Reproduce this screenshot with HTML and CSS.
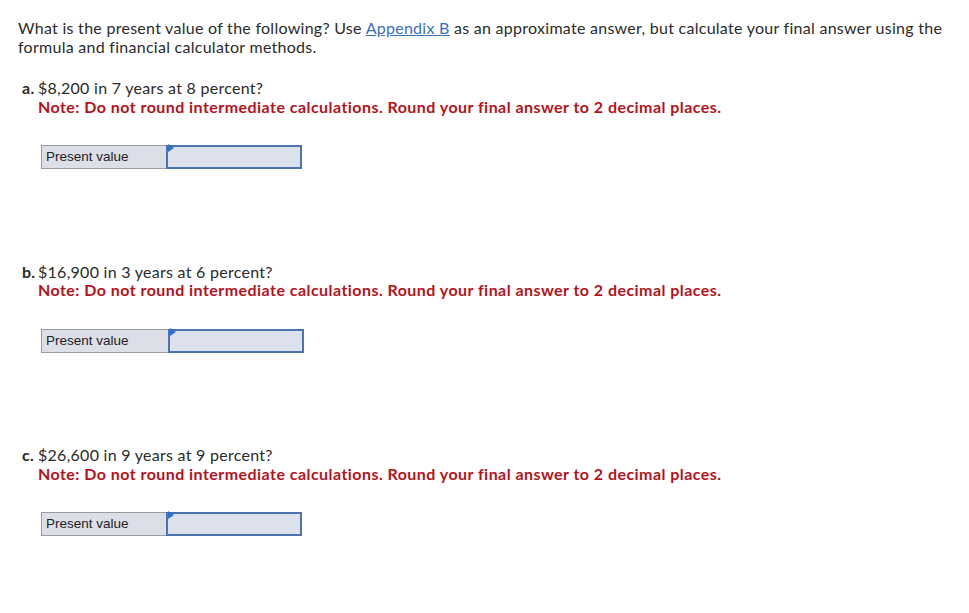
FILE: index.html
```html
<!DOCTYPE html>
<html lang="en">
<head>
<meta charset="utf-8">
<title>Present value</title>
<link rel="stylesheet" href="styles.css">
</head>
<body>
<div class="page">
  <p class="intro">What is the present value of the following? Use <a href="#" class="link">Appendix B</a> as an approximate answer, but calculate your final answer using the formula and financial calculator methods.</p>

  <div class="parts">
    <section class="part">
      <div class="question"><span class="label">a.</span><span class="qtext">$8,200 in 7 years at 8 percent?</span></div>
      <div class="note">Note: Do not round intermediate calculations. Round your final answer to 2 decimal places.</div>
      <div class="answer">
        <div class="answer-label">Present value</div>
        <div class="answer-input"><span class="flag"></span></div>
      </div>
    </section>

    <section class="part">
      <div class="question"><span class="label">b.</span><span class="qtext">$16,900 in 3 years at 6 percent?</span></div>
      <div class="note">Note: Do not round intermediate calculations. Round your final answer to 2 decimal places.</div>
      <div class="answer">
        <div class="answer-label wide">Present value</div>
        <div class="answer-input"><span class="flag"></span></div>
      </div>
    </section>

    <section class="part">
      <div class="question"><span class="label">c.</span><span class="qtext">$26,600 in 9 years at 9 percent?</span></div>
      <div class="note">Note: Do not round intermediate calculations. Round your final answer to 2 decimal places.</div>
      <div class="answer">
        <div class="answer-label">Present value</div>
        <div class="answer-input"><span class="flag"></span></div>
      </div>
    </section>
  </div>
</div>
</body>
</html>
```

FILE: styles.css
```css
html, body {
  margin: 0;
  padding: 0;
  background: #ffffff;
}

body {
  font-family: "Lato", "Open Sans", sans-serif;
  font-size: 16px;
  letter-spacing: 0.27px;
  color: #2b2b2b;
}

.page {
  padding: 18px 18px;
}

.intro {
  margin: 0;
  width: 935px;
  line-height: 19px;
}

.link {
  color: #3a6fc0;
  text-decoration: underline;
}

.parts {
  margin-top: 23px;
  display: flex;
  flex-direction: column;
  gap: 93.5px;
}

.part {
  display: flex;
  flex-direction: column;
}

.question {
  display: flex;
  line-height: 18.5px;
  padding-left: 4px;
}

.label {
  width: 16px;
  font-weight: 700;
}

.note {
  padding-left: 20px;
  line-height: 18.5px;
  font-weight: 700;
  letter-spacing: 0.45px;
  color: #b5121b;
}

.answer {
  margin-top: 29px;
  margin-left: 23px;
  display: flex;
  height: 24px;
  font-family: "Liberation Sans", Arial, sans-serif;
  font-size: 13.5px;
  letter-spacing: 0;
}

.answer-label {
  width: 125px;
  box-sizing: border-box;
  border: 1px solid #9c9c9c;
  border-right: none;
  background: #dcdfe8;
  color: #222;
  padding: 3px 4px;
  line-height: 16px;
}

.answer-label.wide {
  width: 127px;
}

.answer-input {
  position: relative;
  width: 136px;
  box-sizing: border-box;
  border: 2px solid #4b74ae;
  background: #dde1eb;
}

.flag {
  position: absolute;
  top: 0;
  left: 0;
  width: 0;
  height: 0;
  border-top: 4px solid transparent;
  border-bottom: 4px solid transparent;
  border-left: 6px solid #2f6fd1;
  transform: translateY(-3px);
}
```
